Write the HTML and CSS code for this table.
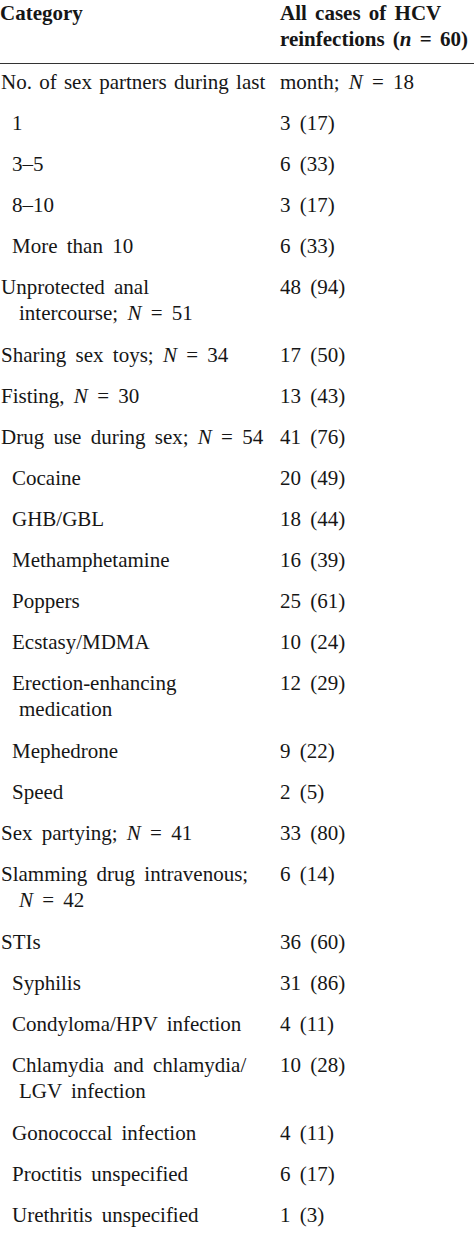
FILE: index.html
```html
<!DOCTYPE html>
<html>
<head>
<meta charset="utf-8">
<link rel="stylesheet" href="styles.css">
</head>
<body>
<table class="tbl">
  <colgroup><col class="c1"><col class="c2"></colgroup>
  <thead>
    <tr>
      <th class="hd">Category</th>
      <th class="hd">All cases of HCV<br>reinfections (<i>n</i> = 60)</th>
    </tr>
  </thead>
  <tbody>
    <tr><td class="span">No. of sex partners during last</td><td>month; <i>N</i> = 18</td></tr>
    <tr><td class="sub">1</td><td>3 (17)</td></tr>
    <tr><td class="sub">3–5</td><td>6 (33)</td></tr>
    <tr><td class="sub">8–10</td><td>3 (17)</td></tr>
    <tr><td class="sub">More than 10</td><td>6 (33)</td></tr>
    <tr class="two"><td class="top">Unprotected anal<br>intercourse; <i>N</i> = 51</td><td>48 (94)</td></tr>
    <tr><td class="top">Sharing sex toys; <i>N</i> = 34</td><td>17 (50)</td></tr>
    <tr><td class="top">Fisting, <i>N</i> = 30</td><td>13 (43)</td></tr>
    <tr><td class="top">Drug use during sex; <i>N</i> = 54</td><td>41 (76)</td></tr>
    <tr><td class="sub">Cocaine</td><td>20 (49)</td></tr>
    <tr><td class="sub">GHB/GBL</td><td>18 (44)</td></tr>
    <tr><td class="sub">Methamphetamine</td><td>16 (39)</td></tr>
    <tr><td class="sub">Poppers</td><td>25 (61)</td></tr>
    <tr><td class="sub">Ecstasy/MDMA</td><td>10 (24)</td></tr>
    <tr class="two"><td class="sub">Erection-enhancing<br>medication</td><td>12 (29)</td></tr>
    <tr><td class="sub">Mephedrone</td><td>9 (22)</td></tr>
    <tr><td class="sub">Speed</td><td>2 (5)</td></tr>
    <tr><td class="top">Sex partying; <i>N</i> = 41</td><td>33 (80)</td></tr>
    <tr class="two"><td class="top">Slamming drug intravenous;<br><i>N</i> = 42</td><td>6 (14)</td></tr>
    <tr><td class="top">STIs</td><td>36 (60)</td></tr>
    <tr><td class="sub">Syphilis</td><td>31 (86)</td></tr>
    <tr><td class="sub">Condyloma/HPV infection</td><td>4 (11)</td></tr>
    <tr class="two"><td class="sub">Chlamydia and chlamydia/<br>LGV infection</td><td>10 (28)</td></tr>
    <tr><td class="sub">Gonococcal infection</td><td>4 (11)</td></tr>
    <tr><td class="sub">Proctitis unspecified</td><td>6 (17)</td></tr>
    <tr><td class="sub">Urethritis unspecified</td><td>1 (3)</td></tr>
  </tbody>
</table>
</body>
</html>
```

FILE: styles.css
```css
html, body {
  margin: 0;
  padding: 0;
  background: #ffffff;
}
body {
  font-family: "Liberation Serif", "Times New Roman", serif;
  font-size: 21px;
  word-spacing: 4px;
  color: #161616;
  overflow: hidden;
}
.tbl {
  border-collapse: collapse;
  table-layout: fixed;
  width: 474px;
}
.c1 { width: 280px; }
.c2 { width: 194px; }
.tbl th,
.tbl td {
  padding: 5px 0 10px 0;
  line-height: 26px;
  text-align: left;
  vertical-align: top;
  white-space: nowrap;
}
.tbl tr.two td {
  padding-bottom: 11px;
}
.tbl th.hd {
  font-weight: bold;
  word-spacing: 3px;
  padding: 0 0 11px 0;
  border-bottom: 1px solid #333;
}
.top {
  padding-left: 19px !important;
  text-indent: -18px;
}
.sub {
  padding-left: 19px !important;
  text-indent: -7px;
}
.span {
  padding-left: 1px !important;
  word-spacing: 2px;
}
```
